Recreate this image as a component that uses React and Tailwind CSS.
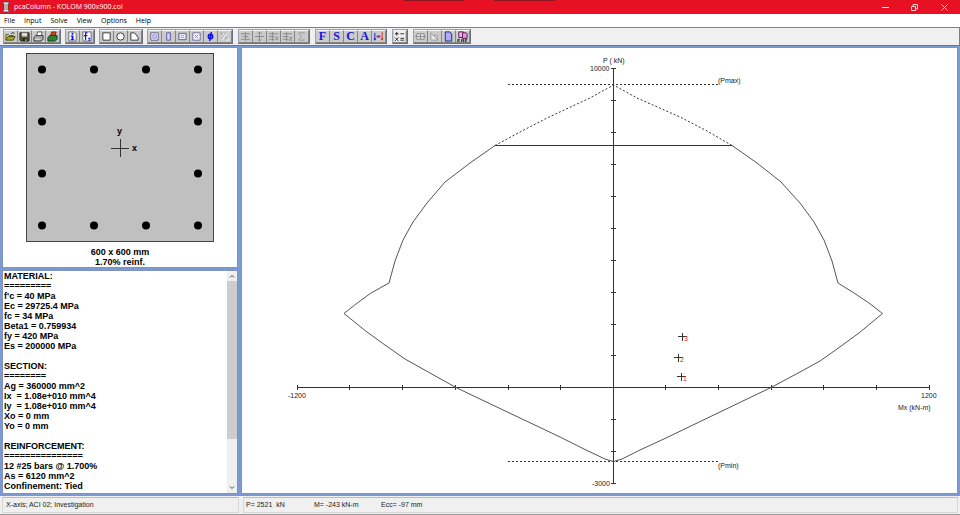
import React from 'react';

const menus = ['File', 'Input', 'Solve', 'View', 'Options', 'Help'];

const report = `MATERIAL:
=========
f'c = 40 MPa
Ec = 29725.4 MPa
fc = 34 MPa
Beta1 = 0.759934
fy = 420 MPa
Es = 200000 MPa

SECTION:
========
Ag = 360000 mm^2
Ix  = 1.08e+010 mm^4
Iy  = 1.08e+010 mm^4
Xo = 0 mm
Yo = 0 mm

REINFORCEMENT:
===============
12 #25 bars @ 1.700%
As = 6120 mm^2
Confinement: Tied`;

const bars = [
  [42, 69.5], [94, 69.5], [146, 69.5], [198, 69.5],
  [42, 121.5], [198, 121.5], [42, 173.5], [198, 173.5],
  [42, 225.5], [94, 225.5], [146, 225.5], [198, 225.5],
];

const loads = [
  { label: '3', x: 682, y: 337 },
  { label: '2', x: 678, y: 358 },
  { label: '1', x: 681, y: 377 },
];

// toolbar drawings, all on a 12x12 grid
const icons = {
  open: (
    <>
      <path d="M1 10V4h3l1 1h4v2" fill="#f5f08a" stroke="#4a4a10" />
      <path d="M1 10l2-4h8l-2 4z" fill="#a8a020" stroke="#4a4a10" />
      <path d="M7 3c1-2 2-2 3 0" fill="none" stroke="#222" />
    </>
  ),
  save: (
    <>
      <path d="M1 2h10v9H2l-1-1z" fill="#54542a" stroke="#222" />
      <path d="M3 2h6v4H3z" fill="#d8d8d8" />
      <path d="M4 8h5v3H4z" fill="#222" />
      <path d="M7 9h1v2H7z" fill="#eee" />
    </>
  ),
  print: (
    <>
      <path d="M4 5l1-4h5L9 5" fill="#fff" stroke="#555" />
      <path d="M1 7l2-2h8v4l-2 2H1z" fill="#aaa" stroke="#333" />
      <path d="M2 9h6" stroke="#eee" />
    </>
  ),
  printColor: (
    <>
      <path d="M4 5l1-4h5L9 5" fill="#d0401c" stroke="#713010" />
      <path d="M1 7l2-2h8v4l-2 2H1z" fill="#1f8a3a" stroke="#103818" />
      <path d="M2 9h6" stroke="#e03020" />
    </>
  ),
  info: (
    <>
      <path d="M2 1h6l2 2v8H2z" fill="#fff" stroke="#666" />
      <path d="M5 2h2v2H5zM4 5h3v4h1v1H4V9h1V6H4z" fill="#1010e8" />
    </>
  ),
  material: (
    <>
      <path d="M2 1h9v10H2z" fill="#fff" stroke="#666" />
      <path d="M7 2H5v8M3 5h4M8 8h2M8 10h2" fill="none" stroke="#1010e8" strokeWidth="1.3" />
    </>
  ),
  rect: <path d="M2 2h8v8H2z" fill="#fff" stroke="#333" />,
  circle: <circle cx="6" cy="6" r="4" fill="#fff" stroke="#333" />,
  irregular: <path d="M2 2h4l4 5v3H2z" fill="#fff" stroke="#333" />,
  allSides: (
    <>
      <path d="M2 2h8v8H2z" fill="#fff" stroke="#55557a" />
      <path d="M4 4h4v4H4z" fill="#c4c4f6" stroke="#9c9cdc" />
    </>
  ),
  sides: <path d="M4 2h4v8H4z" fill="#d5d5ff" stroke="#55559a" />,
  topSides: (
    <>
      <path d="M2 2.500h8v7H2z" fill="#ececff" stroke="#55557a" />
      <path d="M4 5h4M4 7h4" stroke="#a0a0e8" />
    </>
  ),
  irregularBars: (
    <>
      <path d="M2 2h8v8H2z" fill="#fff" stroke="#6666a0" />
      <path d="M4 4l4 4M8 4L4 8" stroke="#7777d8" />
    </>
  ),
  phi: (
    <>
      <ellipse cx="6" cy="6" rx="2.500" ry="2.500" fill="#5070ff" stroke="#1010e0" strokeWidth="1.500" />
      <path d="M7 1L5 11" stroke="#1010e0" strokeWidth="1.500" />
    </>
  ),
  percent: (
    <>
      <path d="M3 10l6-8M3 3h2v2H3zM8 8h2v2H8z" fill="none" stroke="#fff" />
      <path d="M2 9l6-8M2 2h2v2H2zM7 7h2v2H7z" fill="none" stroke="#aaa" />
    </>
  ),
  axial: <path d="M1 3h10M1 9h10M6 1v10M3 6h6" stroke="#888" />,
  factored: <path d="M1 6h10M6 1v10M4 3l2-2 2 2M4 9l2 2 2-2" fill="none" stroke="#888" />,
  service: <path d="M1 3h10M1 6h6M1 9h6M5 1v10M8 6l3 4M11 6l-3 4" fill="none" stroke="#888" />,
  control: <path d="M1 3h10M1 6h6M1 9h6M5 1v10M8 7h3l-3 3h3" fill="none" stroke="#888" />,
  sum: <path d="M9 3V2H3l3 4-3 4h6V9" fill="none" stroke="#999" />,
  loads: (
    <>
      <path d="M2 2v8M1 8l1 2 1-2" fill="none" stroke="#1010d8" />
      <path d="M4 6h4" stroke="#882288" strokeWidth="2" />
      <path d="M10 1v9M9 8l1 2 1-2" fill="none" stroke="#e02020" />
    </>
  ),
  calc: (
    <>
      <path d="M0 0h12v12H0z" fill="#eee" />
      <path d="M1 3h4M3 1v4M7 3h4M1 7l4 4M5 7l-4 4M7 8h4M7 10h4" stroke="#222" />
    </>
  ),
  diagram: <path d="M2 3h8v6H2zM0 6h12M6 3v6" fill="#e6e6e6" stroke="#888" />,
  triangle: <path d="M2 2v8h8zM5 5h4v5" fill="#e6e6e6" stroke="#999" />,
  page: <path d="M2.500 1h5l2 2.500V11h-7z" fill="#aaaaff" stroke="#222266" />,
  emf: (
    <>
      <path d="M2 1h5v6H2z" fill="#f3b8e8" stroke="#551155" />
      <path d="M6 2h4l1 1v5H6z" fill="#e89ae0" stroke="#551155" />
      <path d="M1 9v3M1 9h2M1 11h2M5 12V9l1 1 1-1v3M9 12V9h2M9 11h2" fill="none" stroke="#222" />
    </>
  ),
};

const mainGroups = [
  [['open', 'Open'], ['save', 'Save'], ['print', 'Print results'], ['printColor', 'Print screen']],
  [['info', 'General information'], ['material', 'Material properties']],
  [['rect', 'Rectangular section'], ['circle', 'Circular section'], ['irregular', 'Irregular section']],
  [['allSides', 'All sides equal'], ['sides', 'Equal spacing'], ['topSides', 'Sides different'], ['irregularBars', 'Irregular pattern'], ['phi', 'Bar size'], ['percent', 'Reinforcement ratio']],
];

const loadGroups = [
  [['axial', 'Axial loads'], ['factored', 'Factored'], ['service', 'X slenderness'], ['control', 'Y slenderness'], ['sum', 'Sum']],
  [['F', 'Factored loads'], ['S', 'Service loads'], ['C', 'Control points'], ['A', 'Axial'], ['loads', 'Load points']],
  [['calc', 'Execute']],
  [['diagram', 'P-M diagram'], ['triangle', 'M-M diagram'], ['page', 'Results'], ['emf', 'Copy EMF']],
];

function ToolGroup({ items }) {
  return (
    <div className="flex border border-gray-400 border-r-gray-500 border-b-gray-500 bg-[#c8c8c8]">
      {items.map(([icon, label]) => (
        <button
          key={label}
          aria-label={label}
          className="flex items-center justify-center w-[14px] h-[13px] border-r border-b border-[#858585] border-t border-t-gray-100 bg-[#cbcbcb]"
        >
          {icons[icon] ? (
            <svg viewBox="0 0 12 12" className="w-[11px] h-[11px]">{icons[icon]}</svg>
          ) : (
            <span className="font-['Liberation_Serif',serif] font-bold text-[12px] leading-[11px] text-[#1414dc]">{icon}</span>
          )}
        </button>
      ))}
    </div>
  );
}

function Section() {
  return (
    <div className="flex h-[221px] shrink-0 flex-col items-center bg-white border border-[#8193b8] pt-1">
      <svg viewBox="25 52 190 191" className="w-[190px] h-[191px] shrink-0" shapeRendering="crispEdges">
        <path d="M26.500 53.500h187v188h-187z" fill="#c0c0c0" stroke="#444" />
        {bars.map(([x, y]) => (
          <ellipse key={x + '-' + y} cx={x} cy={y} rx="4" ry="4" fill="#000" shapeRendering="auto" />
        ))}
        <path d="M111 148.500h18M120.500 139v18" stroke="#333" />
        <g shapeRendering="auto" className="font-['Liberation_Sans',Arial,sans-serif] font-bold text-[9px]">
          <text x="117" y="134">y</text>
          <text x="132" y="151">x</text>
        </g>
      </svg>
      <p className="mt-1 font-bold text-[9px] leading-[10px] text-center">
        600 x 600 mm<br />1.70% reinf.
      </p>
    </div>
  );
}

function Report() {
  return (
    <div className="flex flex-1 min-h-0 bg-white border border-[#8193b8]">
      <pre className="flex-1 overflow-hidden pl-px font-['Liberation_Sans',Arial,sans-serif] font-bold text-[9px] leading-[10px]">{report}</pre>
      <div className="flex w-[10px] flex-col bg-[#f0f0f0]">
        <button aria-label="Scroll up" className="flex h-[10px] items-center justify-center">
          <svg viewBox="0 0 6 4" className="w-[6px] h-1"><path d="M1 3.500l2-2 2 2" fill="none" stroke="#444" /></svg>
        </button>
        <div className="flex flex-1 flex-col">
          <div className="h-[78%] bg-[#cdcdcd]" />
        </div>
        <button aria-label="Scroll down" className="flex h-[10px] items-center justify-center">
          <svg viewBox="0 0 6 4" className="w-[6px] h-1"><path d="M1 .5l2 2 2-2" fill="none" stroke="#444" /></svg>
        </button>
      </div>
    </div>
  );
}

function Diagram() {
  const xTicks = [297, 349, 402, 455, 508, 560, 613, 665, 718, 771, 823, 876, 929];
  const yTicks = [68, 100, 132, 164, 196, 228, 260, 292, 324, 355, 387, 419, 451, 483];
  return (
    <svg viewBox="242 48 715 445" className="w-full h-full font-['Liberation_Sans',Arial,sans-serif] text-[7px]">
      <g stroke="#333" fill="none" shapeRendering="crispEdges">
        <path d="M297 387.500H930M613.500 68V484" />
        {xTicks.map((x) => <path key={x} d={`M${x + 0.5} 385v5`} />)}
        {yTicks.map((y) => <path key={y} d={`M611 ${y + 0.5}h5`} />)}
        <path d="M495 145.500H732" />
        <path d="M508 84.500H718M508 461.500H718" strokeDasharray="2 2" />
      </g>
      <g fill="none" stroke="#555">
        <path d="M495 145.500L520 132L547 118L590 98L613.500 85L637 98L680 117L707 131L732 145.500" stroke="#333" strokeDasharray="2 2" />
        <path d="M495 145.500L470 163L445 182L427 203L413 222L403 240L395 261L389 283L371 293L356 304L344 313.500L367 332L385 345L405 359L430 373L456 387.500L480 399L560 437L586 450L605 459L613.500 461.500L622 459L640 450L666 438L747 399L771 387.500L800 372L820 361L837 349L859 333L882.500 313.500L869 303L854 293L838 283L832 261L824 240L814 222L800 203L781 182L757 163L732 145.500" />
      </g>
      {loads.map((p) => (
        <g key={p.label}>
          <path d={`M${p.x - 4} ${p.y - 0.5}h9M${p.x + 0.5} ${p.y - 4}v8`} stroke="#333" shapeRendering="crispEdges" />
          <text x={p.x + 2} y={p.y + 4} fill="#e02020">{p.label}</text>
        </g>
      ))}
      <g fill="#222">
        <text x="603" y="63">P ( kN)</text>
        <text x="590" y="71">10000</text>
        <text x="718" y="83">(Pmax)</text>
        <text x="718" y="468">(Pmin)</text>
        <text x="592" y="486">-3000</text>
        <text x="288" y="398">-1200</text>
        <text x="921" y="398">1200</text>
        <text x="898" y="410">Mx (kN-m)</text>
      </g>
    </svg>
  );
}

export default function App() {
  return (
    <div className="flex h-screen flex-col overflow-hidden bg-[#f0f0f0] text-black font-['Liberation_Sans',Arial,sans-serif]">
      <header className="relative flex h-[14px] shrink-0 items-center bg-[#e81123] text-white">
        <svg viewBox="0 0 8 12" className="ml-[2px] w-2 h-3">
          <path d="M1 1h6v2H6v6h1v2H1V9h1V3H1z" fill="#ddd" stroke="#444" strokeWidth=".7" />
          <path d="M4 3v6" stroke="#888" />
        </svg>
        <h1 className="ml-1 flex-1 font-['Open_Sans','Noto_Sans',sans-serif] text-[7px] leading-[12px]">pcaColumn - KOLOM 900x900.col</h1>
        <div className="absolute left-[404px] top-0 h-px w-[60px] bg-[#8d1520]" />
        <div className="absolute left-[494px] top-0 h-px w-[61px] bg-[#8d1520]" />
        <button aria-label="Minimize" className="flex w-[29px] justify-center">
          <svg viewBox="0 0 7 7" className="w-[7px] h-[7px]"><path d="M0 3.500h7" stroke="#fff" /></svg>
        </button>
        <button aria-label="Restore" className="flex w-[29px] justify-center">
          <svg viewBox="0 0 7 7" className="w-[7px] h-[7px]"><path d="M.5 2.500h4v4h-4zM2 2V.5h4.500V5H5" fill="none" stroke="#fff" strokeWidth=".8" /></svg>
        </button>
        <button aria-label="Close" className="flex w-[31px] justify-center">
          <svg viewBox="0 0 7 7" className="w-[7px] h-[7px]"><path d="M.5.5l6 6M6.500.5l-6 6" stroke="#fff" strokeWidth=".8" /></svg>
        </button>
      </header>

      <nav className="flex h-[13px] shrink-0 items-center gap-[9px] bg-white pl-1 font-['Open_Sans','Noto_Sans',sans-serif] text-[7px] leading-[12px]">
        {menus.map((m) => <button key={m}>{m}</button>)}
      </nav>

      <div className="flex h-[18px] shrink-0 items-center gap-[5px] border-t border-r border-[#808080] pl-[3px]">
        <div className="flex gap-1">
          {mainGroups.map((g, i) => <ToolGroup key={i} items={g} />)}
        </div>
        <div className="flex gap-[5px]">
          {loadGroups.map((g, i) => <ToolGroup key={i} items={g} />)}
        </div>
      </div>

      <main className="flex min-h-0 flex-1 gap-[3px] border-t border-[#66789f] bg-[#7b9ad3] p-[2px] pt-[1px]">
        <div className="flex w-[236px] shrink-0 flex-col gap-[2px]">
          <Section />
          <Report />
        </div>
        <div className="min-w-0 flex-1 border border-[#8193b8] bg-white">
          <Diagram />
        </div>
      </main>

      <footer className="flex h-[19px] shrink-0 items-center gap-1 border-b border-[#999] px-[2px] text-[7px] leading-[14px] text-[#222]">
        <p className="w-[237px] border border-[#d8d8d8] border-t-[#bbb] pl-[3px]">X-axis; ACI 02; Investigation</p>
        <div className="flex flex-1 border border-[#d8d8d8] border-t-[#bbb] pl-[2px]">
          <p className="w-[68px] whitespace-pre">P= 2521  kN</p>
          <p className="w-[67px]">M= -243 kN-m</p>
          <p>Ecc= -97 mm</p>
        </div>
      </footer>
    </div>
  );
}
